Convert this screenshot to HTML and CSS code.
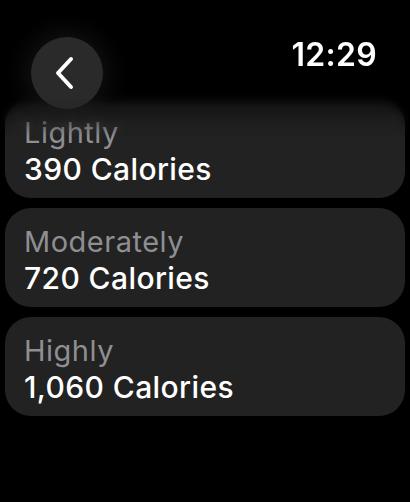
FILE: index.html
```html
<!DOCTYPE html>
<html lang="en">
<head>
<meta charset="utf-8">
<title>Active Calories</title>
<link rel="stylesheet" href="styles.css">
</head>
<body>
<div class="screen">
  <header class="nav">
    <button class="back" aria-label="Back">
      <svg width="22" height="34" viewBox="0 0 22 34" aria-hidden="true">
        <path d="M17 3 L4 17 L17 31" fill="none" stroke="#fff" stroke-width="4" stroke-linecap="round" stroke-linejoin="round"/>
      </svg>
    </button>
    <span class="time">12:29</span>
  </header>
  <ul class="list">
    <li class="card"><span class="label">Lightly</span><span class="value">390 Calories</span></li>
    <li class="card"><span class="label">Moderately</span><span class="value">720 Calories</span></li>
    <li class="card"><span class="label">Highly</span><span class="value">1,060 Calories</span></li>
  </ul>
</div>
</body>
</html>
```

FILE: styles.css
```css
html, body {
  margin: 0;
  padding: 0;
  background: #000;
}

body {
  font-family: Inter, "Noto Sans", sans-serif;
  color: #fff;
  -webkit-font-smoothing: antialiased;
}

.screen {
  position: relative;
  width: 410px;
  height: 502px;
  overflow: hidden;
}

.nav {
  position: absolute;
  top: 0;
  left: 0;
  right: 0;
  height: 138px;
  z-index: 2;
  display: flex;
  justify-content: space-between;
  align-items: flex-start;
  padding: 37px 33px 0 31px;
  box-sizing: border-box;
  background: linear-gradient(to bottom, #000 0%, #000 58%, rgba(0, 0, 0, 0.5) 76%, rgba(0, 0, 0, 0) 100%);
  -webkit-backdrop-filter: blur(5px);
  backdrop-filter: blur(5px);
  -webkit-mask-image: linear-gradient(to bottom, #000 72%, rgba(0, 0, 0, 0) 100%);
  mask-image: linear-gradient(to bottom, #000 72%, rgba(0, 0, 0, 0) 100%);
}

.back {
  width: 72px;
  height: 72px;
  border: 0;
  border-radius: 50%;
  background: #2a2a2a;
  padding: 0 4px 0 0;
  display: flex;
  align-items: center;
  justify-content: center;
  box-shadow: 0 0 24px 6px rgba(30, 30, 30, 0.6);
}

.back svg {
  display: block;
}

.time {
  font-size: 32px;
  font-weight: 600;
  line-height: 1;
  margin-top: 2px;
  letter-spacing: 0.3px;
}

.list {
  list-style: none;
  margin: 0;
  padding: 99px 5px 0;
  display: flex;
  flex-direction: column;
  gap: 10px;
}

.card {
  height: 99px;
  box-sizing: border-box;
  background: #222222;
  border-radius: 26px;
  padding: 16px 19px 0;
  display: flex;
  flex-direction: column;
}

.label {
  font-size: 29px;
  line-height: 35px;
  color: #8e8e93;
  font-weight: 400;
  letter-spacing: 0.5px;
}

.value {
  font-size: 30px;
  line-height: 36px;
  margin-top: 1px;
  font-weight: 500;
  letter-spacing: 0.4px;
}
```
